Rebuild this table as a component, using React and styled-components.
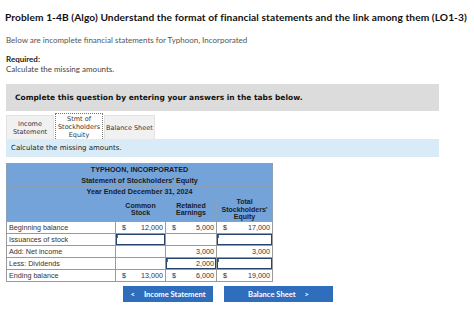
import React from 'react';
import styled, { createGlobalStyle } from 'styled-components';

const GlobalStyle = createGlobalStyle`
  html, body {
    margin: 0;
    padding: 0;
    background: #fff;
  }
`;

const Page = styled.div`
  width: 474px;
  height: 310px;
  overflow: hidden;
  padding: 11px 0 0 6px;
  box-sizing: border-box;
  font-family: Lato, "Open Sans", sans-serif;
  color: #222;
`;

const Title = styled.h1`
  margin: 0 0 0 -1px;
  font-size: 10.2px;
  font-weight: 700;
  line-height: 13px;
  color: #111;
  white-space: nowrap;
  letter-spacing: 0.08px;
`;

const Intro = styled.p`
  margin: 11px 0 0;
  font-size: 8px;
  line-height: 10px;
  color: #555;
`;

const Required = styled.div`
  margin-top: 9px;
  font-size: 8px;
  line-height: 10px;
  color: #444;

  strong {
    display: block;
    color: #222;
  }
`;

const Prompt = styled.div`
  margin-top: 10px;
  width: 433px;
  height: 27px;
  background: #dcdcdc;
  display: flex;
  align-items: center;
  padding-left: 9px;
  box-sizing: border-box;
  font-family: "DejaVu Sans", Verdana, sans-serif;
  font-size: 7.5px;
  font-weight: 700;
  color: #111;
`;

const Tabs = styled.div`
  display: flex;
  align-items: flex-end;
  margin-top: 2px;
  height: 26px;
`;

const Tab = styled.div`
  min-width: 48px;
  height: ${p => (p.$active ? 26 : 24)}px;
  box-sizing: border-box;
  margin-right: 1px;
  padding: 0 1px;
  display: flex;
  align-items: center;
  justify-content: center;
  text-align: center;
  white-space: nowrap;
  font-family: "DejaVu Sans", Verdana, sans-serif;
  font-size: 6.5px;
  line-height: 8px;
  color: #333;
  background: ${p => (p.$active ? '#fff' : '#f1f1f1')};
  border: 1px ${p => (p.$active ? 'dotted #777' : 'solid #e2e2e2')};
  border-bottom: none;
`;

const InfoBar = styled.div`
  width: 433px;
  height: 18px;
  background: #d8ebf6;
  display: flex;
  align-items: center;
  padding-left: 5px;
  box-sizing: border-box;
  font-family: "DejaVu Sans", Verdana, sans-serif;
  font-size: 7px;
  color: #222;
`;

const Table = styled.table`
  margin-top: 6px;
  width: 266px;
  border-collapse: collapse;
  font-family: "Liberation Sans", Arial, sans-serif;
  font-size: 7.2px;
  line-height: 9px;
  color: #333;
  table-layout: fixed;
`;

const HeadCell = styled.th`
  background: #74a3da;
  border: 1px solid #8a9fb8;
  height: ${p => p.$h || 11}px;
  padding: 0;
  font-weight: 700;
  color: #1c1c1c;
  text-align: center;
  line-height: 7.5px;
  font-size: ${p => (p.$small ? 7 : 7.2)}px;
  box-sizing: border-box;
`;

const LabelCell = styled.td`
  border: 1px solid #9a9a9a;
  height: 12px;
  padding: 0 0 0 2px;
  white-space: nowrap;
  color: #333;
  box-sizing: border-box;
`;

const ValueCell = styled.td`
  border: 1px solid #9a9a9a;
  height: 12px;
  padding: 0 2px 0 6px;
  position: relative;
  box-sizing: border-box;
  box-shadow: ${p => (p.$input ? 'inset 0 0 0 1px #27456e' : 'none')};

  &::before {
    content: '';
    display: ${p => (p.$input ? 'block' : 'none')};
    position: absolute;
    left: 1px;
    top: 1px;
    width: 1px;
    height: 3px;
    background: #2c72c9;
  }
`;

const Amount = styled.div`
  display: flex;
  justify-content: space-between;
`;

const Nav = styled.div`
  display: flex;
  gap: 11px;
  margin: 4px 0 0 117px;
`;

const NavButton = styled.button`
  width: ${p => p.$w}px;
  height: 16px;
  background: #2f6dbd;
  border: none;
  color: #fff;
  font-family: Lato, "Open Sans", sans-serif;
  font-size: 7.6px;
  font-weight: 700;
  display: flex;
  align-items: center;
  justify-content: center;
  gap: 9px;
  padding: 0;
`;

const rows = [
  { label: 'Beginning balance', cs: ['$', '12,000'], re: ['$', '5,000'], tot: ['$', '17,000'] },
  { label: 'Issuances of stock', cs: 'input', re: null, tot: 'input' },
  { label: 'Add: Net income', cs: null, re: ['', '3,000'], tot: ['', '3,000'] },
  { label: 'Less: Dividends', cs: null, re: ['', '2,000'], reInput: true, tot: 'input' },
  { label: 'Ending balance', cs: ['$', '13,000'], re: ['$', '6,000'], tot: ['$', '19,000'] },
];

const Cell = ({ value, input }) => {
  if (value === 'input') return <ValueCell $input />;
  if (!value) return <ValueCell $input={input} />;
  return (
    <ValueCell $input={input}>
      <Amount>
        <span>{value[0]}</span>
        <span>{value[1]}</span>
      </Amount>
    </ValueCell>
  );
};

export default function App() {
  return (
    <Page>
      <GlobalStyle />
      <Title>Problem 1-4B (Algo) Understand the format of financial statements and the link among them (LO1-3)</Title>
      <Intro>Below are incomplete financial statements for Typhoon, Incorporated</Intro>
      <Required>
        <strong>Required:</strong>
        Calculate the missing amounts.
      </Required>
      <Prompt>Complete this question by entering your answers in the tabs below.</Prompt>
      <Tabs>
        <Tab>Income<br />Statement</Tab>
        <Tab $active>Stmt of<br />Stockholders<br />Equity</Tab>
        <Tab>Balance Sheet</Tab>
      </Tabs>
      <InfoBar>Calculate the missing amounts.</InfoBar>
      <Table>
        <colgroup>
          <col style={{ width: 109 }} />
          <col style={{ width: 50 }} />
          <col style={{ width: 51 }} />
          <col style={{ width: 56 }} />
        </colgroup>
        <thead>
          <tr><HeadCell colSpan={4} $h={12}>TYPHOON, INCORPORATED</HeadCell></tr>
          <tr><HeadCell colSpan={4} $h={11}>Statement of Stockholders' Equity</HeadCell></tr>
          <tr><HeadCell colSpan={4} $h={11}>Year Ended December 31, 2024</HeadCell></tr>
          <tr>
            <HeadCell $h={22} />
            <HeadCell $h={22} $small>Common<br />Stock</HeadCell>
            <HeadCell $h={22} $small>Retained<br />Earnings</HeadCell>
            <HeadCell $h={22} $small>Total<br />Stockholders'<br />Equity</HeadCell>
          </tr>
        </thead>
        <tbody>
          {rows.map(r => (
            <tr key={r.label}>
              <LabelCell>{r.label}</LabelCell>
              <Cell value={r.cs} />
              <Cell value={r.re} input={r.reInput} />
              <Cell value={r.tot} />
            </tr>
          ))}
        </tbody>
      </Table>
      <Nav>
        <NavButton $w={90}><span>&lt;</span>Income Statement</NavButton>
        <NavButton $w={109}>Balance Sheet<span>&gt;</span></NavButton>
      </Nav>
    </Page>
  );
}
